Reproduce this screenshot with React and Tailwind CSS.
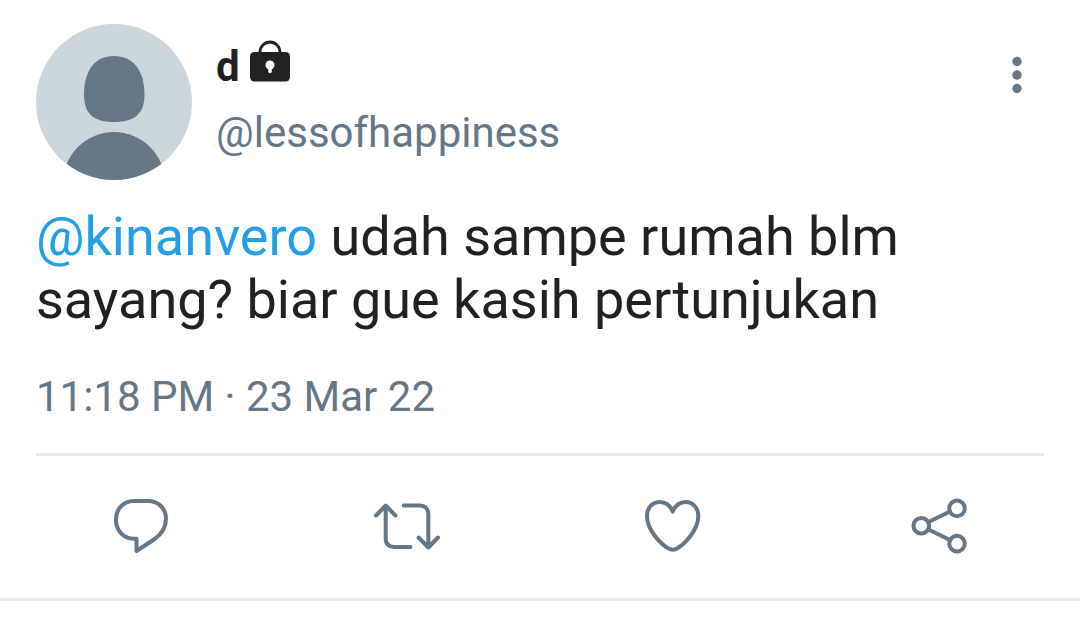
const Avatar = () => (
  <svg viewBox="0 0 156 156" className="size-39 shrink-0 rounded-full" role="img" aria-label="Profile picture">
    <rect width="156" height="156" fill="#ccd6dd" />
    <path
      d="M78 32C97 32 108.500 46 108.500 71C108.500 90 98 98 78 98C58 98 48 90 48 71C48 46 59 32 78 32Z"
      fill="#657786"
    />
    <circle cx="78" cy="159" r="51" fill="#657786" />
  </svg>
);

const LockIcon = () => (
  <svg viewBox="0 0 40 40" className="size-10 overflow-visible" role="img" aria-label="Protected account">
    <path d="M10 13V11C10 5.500 14.500 1 20 1C25.500 1 30 5.500 30 11V13" fill="none" stroke="#212121" strokeWidth="2.800" />
    <rect y="11" width="40" height="29.500" rx="4.500" fill="#212121" />
    <circle cx="20" cy="24" r="4.500" fill="#fff" />
    <path d="M20 25V30.500" stroke="#fff" strokeWidth="3.500" strokeLinecap="round" />
  </svg>
);

const MoreIcon = () => (
  <svg viewBox="0 0 54 54" className="size-13.5" fill="#657786" aria-hidden="true">
    <circle cx="27" cy="13.500" r="4.700" />
    <circle cx="27" cy="27" r="4.700" />
    <circle cx="27" cy="40.500" r="4.700" />
  </svg>
);

const actions = [
  {
    label: "Reply",
    icon: (
      <path d="M29 11H43C54 11 61 19 61 29C61 38 57 44 49 49.500L31.500 61V48.700H29C18 48.700 11 40 11 30C11 19 18 11 29 11Z" />
    ),
  },
  {
    label: "Retweet",
    icon: (
      <>
        <path d="M5 25.500L14.700 15.500L24.400 25.500M14.700 16V48.500C14.700 54 18 57 23 57H39.500" />
        <path d="M32.700 15.500H48.500C54 15.500 57.300 19 57.300 24V57M47.600 47.500L57.300 57.500L67 47.500" />
      </>
    ),
  },
  {
    label: "Like",
    icon: (
      <path d="M35.700 21.500C33 15 28 12 23 12C15 12 10 18 10 26C10 40 24 55 33 59.200C35 60 36.500 60 38.500 59.200C47.500 55 61.300 40 61.300 26C61.300 18 56 12 48.500 12C43 12 38.500 15 35.700 21.500Z" />
    ),
  },
  {
    label: "Share",
    icon: (
      <>
        <circle cx="18.300" cy="35.700" r="7.800" />
        <circle cx="54" cy="18.400" r="7.800" />
        <circle cx="54" cy="53.600" r="7.800" />
        <path d="M25.500 32L47 21.500M25.500 39.500L47 50" />
      </>
    ),
  },
];

const App = () => {
  return (
    <main className="bg-white font-[Roboto,sans-serif] text-[#212121]">
      <article className="border-b-3 border-[#ebebeb] pt-6">
        <div className="px-9">
          {/* Author */}
          <header className="flex items-start">
            <Avatar />
            <div className="ml-6 flex-1 pt-2.5 text-[42px] leading-[66px]">
              <div className="flex items-center gap-2.5">
                <h1 className="font-bold">d</h1>
                <div className="pb-3">
                  <LockIcon />
                </div>
              </div>
              <a href="#profile" className="block text-[#657786]">
                @lessofhappiness
              </a>
            </div>
            <button type="button" aria-label="More" className="mt-6">
              <MoreIcon />
            </button>
          </header>

          {/* Tweet */}
          <p className="mt-[25px] text-[54px] leading-[63px]">
            <a href="#kinanvero" className="text-[#239fe8]">
              @kinanvero
            </a>{" "}
            udah sampe rumah blm sayang? biar gue kasih pertunjukan
          </p>
          <time dateTime="2022-03-23T23:18" className="mt-[41px] block pb-[31px] text-[42px] leading-[50px] text-[#657786]">
            11:18 PM · 23 Mar 22
          </time>
          <hr className="border-t-3 border-[#ebebeb]" />
        </div>

        {/* Actions */}
        <div className="grid grid-cols-4 px-2 pt-8.5 pb-9">
          {actions.map(({ label, icon }) => (
            <button key={label} type="button" aria-label={label} className="flex justify-center">
              <svg
                viewBox="0 0 72 72"
                className="size-18"
                fill="none"
                stroke="#657786"
                strokeWidth="4"
                strokeLinecap="round"
                strokeLinejoin="round"
                aria-hidden="true"
              >
                {icon}
              </svg>
            </button>
          ))}
        </div>
      </article>
    </main>
  );
};

export default App;
